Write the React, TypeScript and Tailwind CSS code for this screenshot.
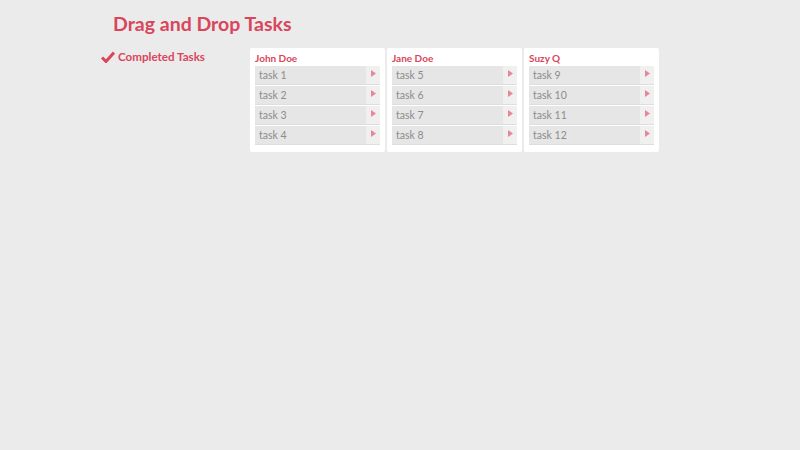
import React from "react";

const columns = [
  { name: "John Doe", tasks: ["task 1", "task 2", "task 3", "task 4"] },
  { name: "Jane Doe", tasks: ["task 5", "task 6", "task 7", "task 8"] },
  { name: "Suzy Q", tasks: ["task 9", "task 10", "task 11", "task 12"] },
];

function Row({ label }: { label: string }) {
  return (
    <div className="flex h-[19px] mb-[1px] bg-[#e6e6e6] border-b border-[#dedede]">
      <div className="flex-1 pl-[4px] text-[10.5px] leading-[19px] text-[#8c8c8c]">{label}</div>
      <div className="w-[14px] bg-[#f0f0f0] flex justify-center pt-[4px]">
        <svg width="5" height="7" viewBox="0 0 5 7">
          <polygon points="0,0 5,3.5 0,7" fill="#e8869a" />
        </svg>
      </div>
    </div>
  );
}

export default function App() {
  return (
    <div
      className="min-h-screen w-full bg-[#ebebeb]"
      style={{ fontFamily: "Lato, 'Open Sans', sans-serif" }}
    >
      <h1 className="pl-[113px] pt-[10px] text-[19.5px] leading-[28px] font-bold text-[#d9465b]">
        Drag and Drop Tasks
      </h1>
      <div className="flex mt-[10px]">
        <div className="w-[250px] pl-[101px] pt-[1px] flex items-start">
          <div className="flex items-center gap-[3px] text-[#d9465b] text-[11.6px] font-bold leading-[16px]">
            <svg width="14" height="12" viewBox="0 0 14 12">
              <path d="M1 6.5 L5 10.5 L13 1.5" stroke="#d9465b" strokeWidth="3" fill="none" strokeLinejoin="miter" />
            </svg>
            <span>Completed Tasks</span>
          </div>
        </div>
        <div className="flex gap-[2px]">
          {columns.map((c) => (
            <div key={c.name} className="w-[135px] bg-white rounded-[2px] px-[5px] pt-[3px] pb-[6px]">
              <div className="text-[10px] font-bold leading-[15px] text-[#d9465b]">{c.name}</div>
              {c.tasks.map((t) => (
                <Row key={t} label={t} />
              ))}
            </div>
          ))}
        </div>
      </div>
    </div>
  );
}
